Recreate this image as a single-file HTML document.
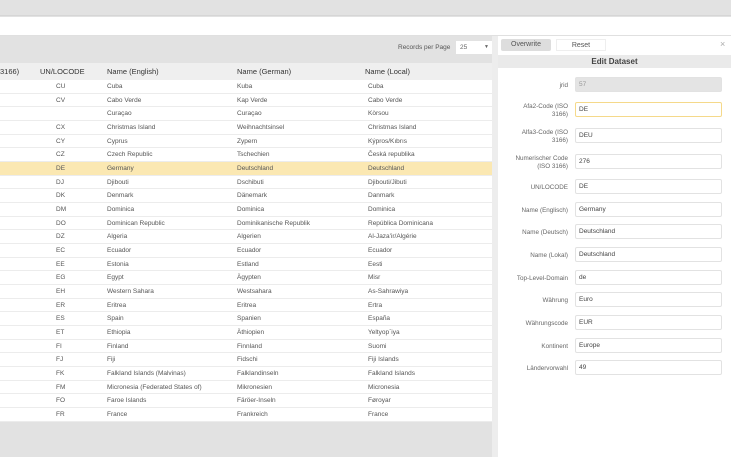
<!DOCTYPE html>
<html><head><meta charset="utf-8"><style>
*{margin:0;padding:0;box-sizing:border-box}
body{width:731px;height:457px;overflow:hidden;background:#e2e2e2;font-family:"Liberation Sans","DejaVu Sans",sans-serif;position:relative;color:#444}
.a{position:absolute}
.row{position:absolute;left:0;width:492px;height:13.67px;background:#fff;border-bottom:1px solid #ececec;font-size:6.5px;line-height:13px;color:#555}
.row span{position:absolute}
.lbl{position:absolute;right:163px;width:70px;text-align:right;font-size:6.3px;color:#666;line-height:8px}
.inp{position:absolute;left:575px;width:147px;height:15px;border:1px solid #e2e2e2;border-radius:2px;background:#fff;font-size:6.5px;display:flex;align-items:center;padding-left:3px;color:#444}
</style></head><body>
<div class="a" style="left:0;top:0;width:731px;height:16px;background:#e2e2e2;border-bottom:1px solid #d6d6d6"></div>
<div class="a" style="left:0;top:17px;width:731px;height:19px;background:#fff;border-bottom:1px solid #e0e0e0"></div>
<div class="a" style="left:398px;top:44px;font-size:6.5px;color:#555">Records per Page</div>
<div class="a" style="left:456px;top:41px;width:36px;height:13px;background:#fff;font-size:6.5px;line-height:13px;padding-left:4px;color:#666">25<span style="position:absolute;right:3px;font-size:5px">▼</span></div>
<div class="a" style="left:0;top:63px;width:492px;height:17px;background:#efefef;font-size:7.5px;line-height:17px;color:#333">
<span class="a" style="left:0">3166)</span><span class="a" style="left:40px">UN/LOCODE</span><span class="a" style="left:107px">Name (English)</span><span class="a" style="left:237px">Name (German)</span><span class="a" style="left:365px">Name (Local)</span></div>
<div class="a" style="left:492px;top:36px;width:6px;height:421px;background:#ededed"></div>
<div id="rows"></div>
<div class="a" style="left:498px;top:36px;width:233px;height:421px;background:#fff"></div>
<div class="a" style="left:501px;top:39px;width:50px;height:12px;background:#ddd;border-radius:2px;font-size:7px;line-height:12px;text-align:center;color:#555">Overwrite</div>
<div class="a" style="left:556px;top:39px;width:50px;height:12px;background:#fff;border:1px solid #eee;font-size:7px;line-height:11px;text-align:center;color:#555">Reset</div>
<div class="a" style="left:720px;top:39px;font-size:9px;color:#aaa">×</div>
<div class="a" style="left:498px;top:55px;width:233px;height:13px;background:#eaeaea;font-size:8px;font-weight:bold;line-height:13px;text-align:center;color:#444">Edit Dataset</div>
<div id="form"></div>
<script>
var d=[["CU","Cuba","Kuba","Cuba"],["CV","Cabo Verde","Kap Verde","Cabo Verde"],["","Cura\u00e7ao","Curaçao","Kòrsou"],["CX","Christmas Island","Weihnachtsinsel","Christmas Island"],["CY","Cyprus","Zypern","Kýpros/Kıbrıs"],["CZ","Czech Republic","Tschechien","Česká republika"],["DE","Germany","Deutschland","Deutschland"],["DJ","Djibouti","Dschibuti","Djibouti/Jibuti"],["DK","Denmark","Dänemark","Danmark"],["DM","Dominica","Dominica","Dominica"],["DO","Dominican Republic","Dominikanische Republik","República Dominicana"],["DZ","Algeria","Algerien","Al-Jaza'ir/Algérie"],["EC","Ecuador","Ecuador","Ecuador"],["EE","Estonia","Estland","Eesti"],["EG","Egypt","Ägypten","Misr"],["EH","Western Sahara","Westsahara","As-Sahrawiya"],["ER","Eritrea","Eritrea","Ertra"],["ES","Spain","Spanien","España"],["ET","Ethiopia","Äthiopien","Yeltyop`iya"],["FI","Finland","Finnland","Suomi"],["FJ","Fiji","Fidschi","Fiji Islands"],["FK","Falkland Islands (Malvinas)","Falklandinseln","Falkland Islands"],["FM","Micronesia (Federated States of)","Mikronesien","Micronesia"],["FO","Faroe Islands","Färöer-Inseln","Føroyar"],["FR","France","Frankreich","France"]];
var h="";d.forEach(function(r,i){var t=80+i*13.67;h+='<div class="row" style="top:'+t+'px;'+(i==6?'background:#fbe8b2':'')+'"><span style="left:56px">'+r[0]+'</span><span style="left:107px">'+r[1]+'</span><span style="left:237px">'+r[2]+'</span><span style="left:368px">'+r[3]+'</span></div>'});
document.getElementById("rows").innerHTML=h;
var f=[["jrid","57",84],["Afa2-Code (ISO<br>3166)","DE",109],["Alfa3-Code (ISO<br>3166)","DEU",135],["Numerischer Code<br>(ISO 3166)","276",161],["UN/LOCODE","DE",186],["Name (Englisch)","Germany",209],["Name (Deutsch)","Deutschland",231],["Name (Lokal)","Deutschland",254],["Top-Level-Domain","de",277],["Währung","Euro",299],["Währungscode","EUR",322],["Kontinent","Europe",345],["Ländervorwahl","49",367]];
var g="";f.forEach(function(r,i){var two=r[0].indexOf("<br>")>0;g+='<div class="lbl" style="top:'+(r[2]-2-(two?4:0))+'px">'+r[0]+'</div><div class="inp" style="top:'+(r[2]-7)+'px;'+(i==0?'background:#e4e4e4;color:#999;':'')+(i==1?'border-color:#f5d98a;':'')+'">'+r[1]+'</div>'});
document.getElementById("form").innerHTML=g;
</script>
</body></html>
